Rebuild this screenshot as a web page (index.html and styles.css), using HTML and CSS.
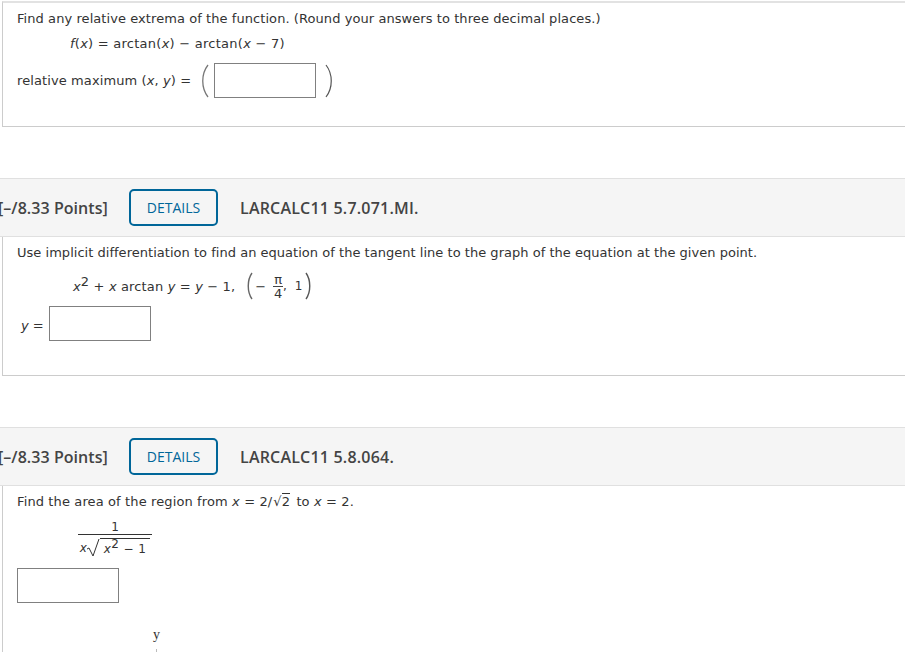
FILE: index.html
```html
<!DOCTYPE html>
<html lang="en">
<head>
<meta charset="utf-8">
<title>Questions</title>
<link rel="stylesheet" href="styles.css">
</head>
<body>
<section class="panel first">
  <p class="q q1">Find any relative extrema of the function. (Round your answers to three decimal places.)</p>
  <p class="eq"><i>f</i>(<i>x</i>) = arctan(<i>x</i>) &minus; arctan(<i>x</i> &minus; 7)</p>
  <div class="answer ans1">
    <span class="label">relative maximum (<i>x</i>, <i>y</i>) =</span>
    <svg class="paren pl" width="8" height="34" viewBox="0 0 8 34"><path d="M7 1C0 10 0 24 7 33" fill="none" stroke="#777" stroke-width="1.3"/></svg>
    <span class="box"></span>
    <svg class="paren pr" width="8" height="34" viewBox="0 0 8 34"><path d="M1 1C8 10 8 24 1 33" fill="none" stroke="#555" stroke-width="1.2"/></svg>
  </div>
</section>

<header class="head">
  <span class="pts">[&ndash;/8.33 Points]</span>
  <span class="btn">DETAILS</span>
  <span class="code">LARCALC11 5.7.071.MI.</span>
</header>
<section class="panel second">
  <p class="q q2">Use implicit differentiation to find an equation of the tangent line to the graph of the equation at the given point.</p>
  <div class="eq2">
    <span class="mathrow"><i>x</i><sup>2</sup> + <i>x</i> arctan <i>y</i> = <i>y</i> &minus; 1,</span>
    <svg class="paren bl" width="7" height="28" viewBox="0 0 7 28"><path d="M6 1C1 8 1 20 6 27" fill="none" stroke="#666" stroke-width="1.4"/></svg>
    <span class="minus">&minus;</span>
    <span class="frac"><span class="num">&pi;</span><span class="den">4</span></span><span class="cm">, 1</span>
    <svg class="paren br" width="7" height="28" viewBox="0 0 7 28"><path d="M1 1C6 8 6 20 1 27" fill="none" stroke="#555" stroke-width="1.4"/></svg>
  </div>
  <div class="answer ans2">
    <span class="ylabel"><i>y</i> =</span>
    <span class="box"></span>
  </div>
</section>

<header class="head">
  <span class="pts">[&ndash;/8.33 Points]</span>
  <span class="btn">DETAILS</span>
  <span class="code">LARCALC11 5.8.064.</span>
</header>
<section class="panel third">
  <p class="q q3">Find the area of the region from <i>x</i> = 2/<span class="rad">&radic;<span class="over">2</span></span> to <i>x</i> = 2.</p>
  <div class="bigfrac">
    <span class="n">1</span>
    <span class="d"><i class="dx">x</i><svg class="surd" width="13" height="19" viewBox="0 0 13 19"><path d="M0 11L2 10L6 18L12 1" fill="none" stroke="#333" stroke-width="1"/></svg><span class="over inner"><i>x</i><sup>2</sup> &minus; 1</span></span>
  </div>
  <span class="box solo"></span>
  <p class="graphy">y</p>
  <span class="tick"></span>
</section>
</body>
</html>
```

FILE: styles.css
```css
html, body { margin: 0; padding: 0; background: #fff; }
body {
  width: 905px;
  height: 652px;
  overflow: hidden;
  font-family: "DejaVu Sans", Verdana, sans-serif;
  font-size: 13px;
  color: #333;
  padding-top: 1px;
  box-sizing: border-box;
}
p { margin: 0; }
i { font-style: italic; }
.panel {
  margin-left: 2px;
  border-left: 1px solid #ccc;
  padding-left: 14px;
  box-sizing: border-box;
  position: relative;
}
.first {
  height: 126px;
  border-top: 2px solid #e2e2e2;
  border-bottom: 1px solid #ccc;
  padding-top: 8px;
  margin-bottom: 51px;
}
.second {
  height: 139px;
  border-bottom: 1px solid #ccc;
  padding-top: 8px;
  margin-bottom: 51px;
}
.third { height: 170px; padding-top: 8px; }
.q { line-height: 16px; white-space: nowrap; }
.q1 { letter-spacing: 0.07px; }
.q2 { letter-spacing: 0.026px; }
.q3 { letter-spacing: 0.12px; }
.eq { margin: 9px 0 0 53px; line-height: 16px; letter-spacing: 0.25px; white-space: nowrap; }
.answer { display: flex; align-items: center; }
.ans1 { margin-top: 11px; height: 35px; }
.label { letter-spacing: 0.1px; }
.pl { margin-left: 10px; margin-right: 5px; }
.pr { margin-left: 9px; }
.box {
  display: block;
  width: 102px;
  height: 35px;
  box-sizing: border-box;
  border: 1px solid #808080;
  background: #fff;
}
.head {
  height: 59px;
  box-sizing: border-box;
  background: #f5f5f5;
  border-top: 1px solid #e0e0e0;
  border-bottom: 1px solid #e0e0e0;
  display: flex;
  align-items: center;
  font-family: "Open Sans", sans-serif;
  font-size: 16px;
  font-weight: 600;
  color: #444;
  white-space: nowrap;
}
.pts { width: 131px; flex: none; margin-left: -2px; letter-spacing: 0.05px; }
.btn {
  width: 89px;
  height: 37px;
  box-sizing: border-box;
  border: 2px solid #006699;
  border-radius: 5px;
  color: #006699;
  font-size: 14px;
  font-weight: 500;
  display: flex;
  align-items: center;
  justify-content: center;
  flex: none;
}
.code { margin-left: 22px; letter-spacing: 0.2px; }
.eq2 { display: flex; align-items: center; height: 32px; margin: 9px 0 0 56px; }
.mathrow { letter-spacing: 0.15px; white-space: nowrap; }
sup { font-size: 13px; line-height: 0; }
.bl { margin-left: 11px; }
.br { margin-left: 3px; }
.minus { margin-left: 2px; }
.frac { display: inline-flex; flex-direction: column; align-items: center; margin-left: 7px; line-height: 13px; font-size: 13px; }
.num { border-bottom: 1px solid #444; padding: 0 1px; }
.cm { font-size: 12px; word-spacing: 4px; }
.ans2 { margin-top: 4px; gap: 5px; padding-left: 4px; }
.ylabel { padding-top: 4px; }
.over { border-top: 1px solid #333; }
.rad { white-space: nowrap; padding: 0 2px 0 1px; }
.bigfrac {
  margin: 10px 0 0 61px;
  width: 74px;
  display: flex;
  flex-direction: column;
  align-items: center;
  font-size: 12px;
  line-height: 14px;
}
.bigfrac .n { width: 100%; text-align: center; border-bottom: 1px solid #333; padding-bottom: 0; }
.bigfrac .d { display: flex; white-space: nowrap; padding-top: 3px; }
.dx { margin-top: 3px; }
.surd { flex: none; }
.inner { padding: 3px 4px 0 4px; line-height: 14px; letter-spacing: 0.4px; }
.inner sup { font-size: 12px; }
.solo { margin-top: 11px; }
.graphy {
  position: absolute;
  left: 150px;
  top: 141px;
  font-family: "Liberation Serif", serif;
  font-size: 14px;
  color: #333;
}
.tick {
  position: absolute;
  left: 153px;
  top: 163px;
  width: 1px;
  height: 4px;
  background: #bbb;
}
```
